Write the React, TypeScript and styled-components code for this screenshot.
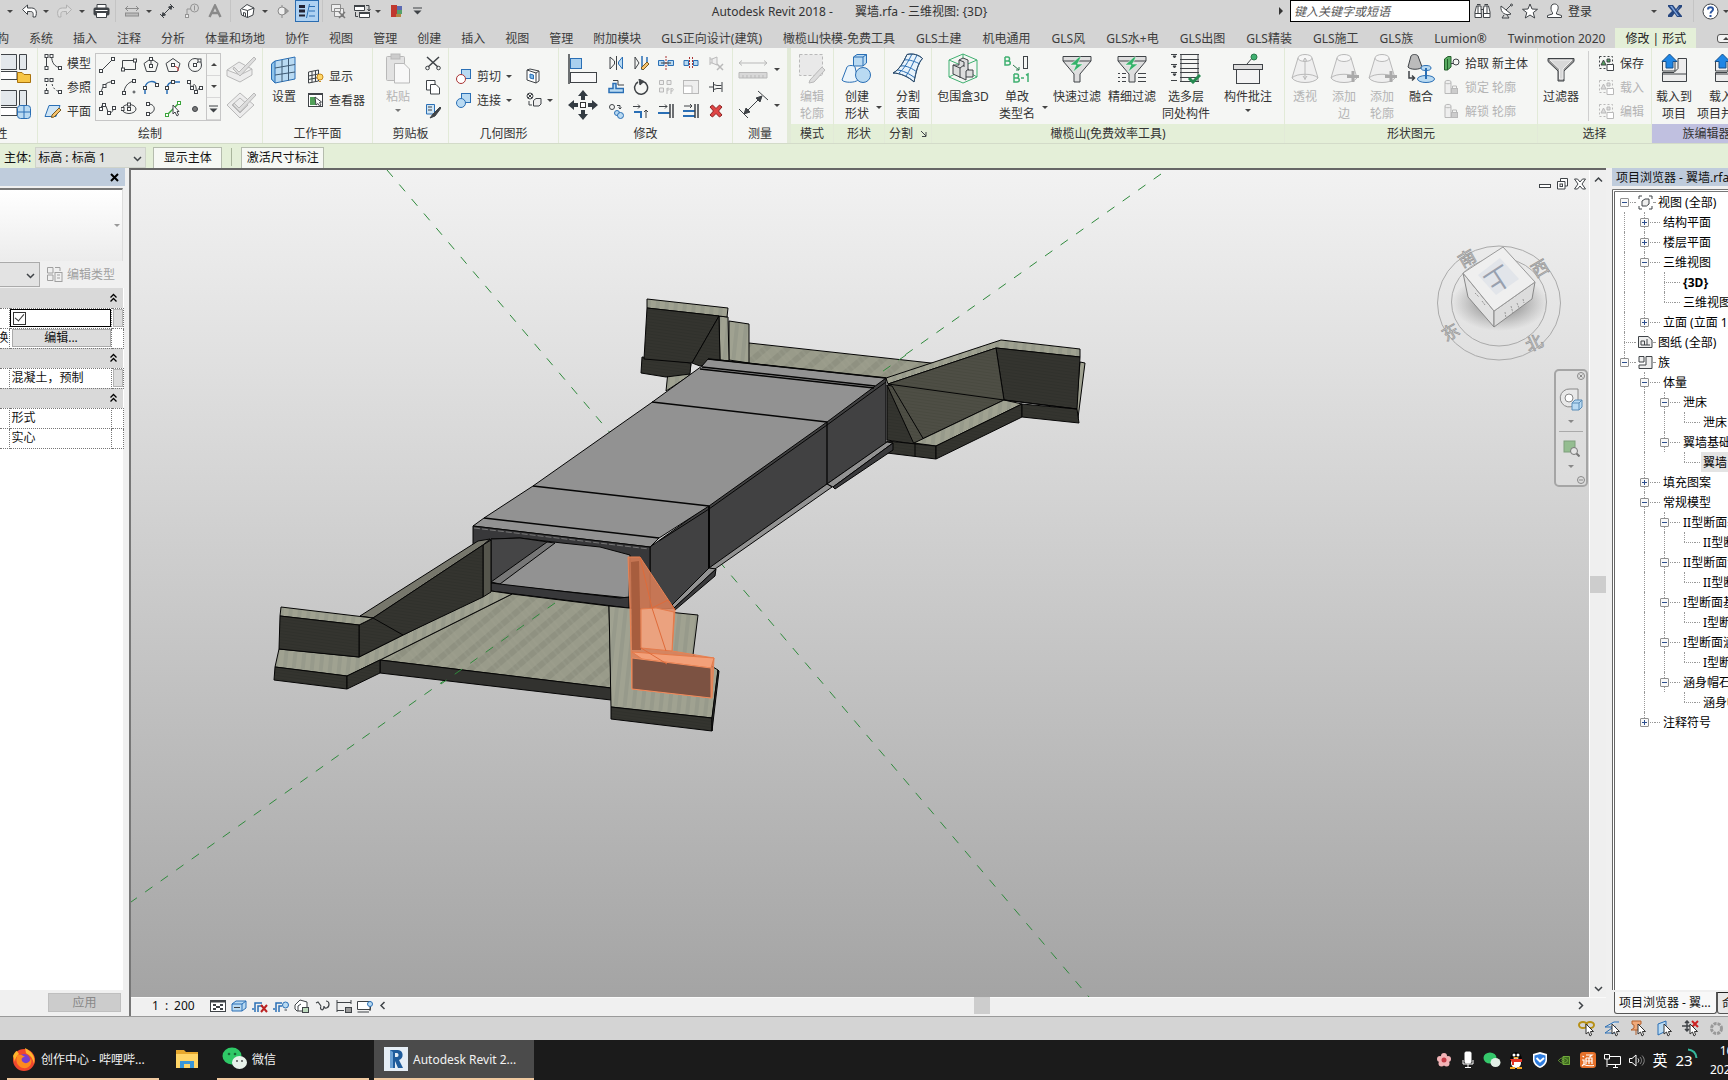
import React from "react";
import styled, { createGlobalStyle, css } from "styled-components";

const Global = createGlobalStyle`
  * { box-sizing: border-box; }
  html, body { margin: 0; padding: 0; overflow: hidden; }
  body, button, input, select {
    font-family: "Noto Sans", "Noto Sans CJK SC", sans-serif;
    font-size: 12px;
    line-height: 17px;
    color: #333;
  }
  button { border: 0; padding: 0; margin: 0; background: none; }
  svg { display: block; flex: none; }
`;

const Shell = styled.div`
  display: flex;
  flex-direction: column;
  width: 100%;
  height: 100vh;
  overflow: hidden;
  background: #f0f0f0;
  white-space: nowrap;
`;

/* ---------- title bar ---------- */
const TitleBar = styled.header`
  flex: none;
  display: flex;
  height: 26px;
  padding-bottom: 4px;
  background: #d4d4d4;
  align-items: center;
`;
const QuickTools = styled.div`
  flex: none;
  display: flex;
  align-items: center;
  width: 428px;
  height: 22px;
`;
const QuickButton = styled.button<{ $w: number; $on?: boolean }>`
  flex: none;
  display: flex;
  align-items: center;
  justify-content: center;
  width: ${(p) => p.$w}px;
  height: 22px;
  ${(p) => p.$on && css`background: #aed1f2; border: 1px solid #2a6cb0;`}
`;
const Sep = styled.span<{ $h?: number; $m?: number; $c?: string }>`
  flex: none;
  width: 1px;
  height: ${(p) => p.$h ?? 22}px;
  margin: 0 ${(p) => p.$m ?? 3}px;
  background: ${(p) => p.$c ?? "#c4c4c4"};
`;
const WindowTitle = styled.div`
  flex: 1;
  display: flex;
  justify-content: center;
  gap: 22px;
  padding-right: 8px;
`;
const TitleTools = styled.div`
  flex: none;
  display: flex;
  align-items: center;
  width: 449px;
  height: 22px;
`;
const Search = styled.input`
  flex: none;
  width: 180px;
  height: 22px;
  margin: 0 2px 0 7px;
  padding: 0 3px;
  border: 1px solid #000;
  border-radius: 0;
  background: #fff;
  font-style: italic;
  &::placeholder { color: #555; opacity: 1; }
`;
const SignIn = styled.button`
  flex: none;
  margin-right: 56px;
`;

const Down = styled.span<{ $up?: boolean; $c?: string }>`
  flex: none;
  width: 0;
  height: 0;
  border-left: 3px solid transparent;
  border-right: 3px solid transparent;
  ${(p) => (p.$up ? "border-bottom" : "border-top")}: 3px solid ${(p) => p.$c ?? "#444"};
`;
const Right = styled.span`
  flex: none;
  width: 0;
  height: 0;
  border-top: 4px solid transparent;
  border-bottom: 4px solid transparent;
  border-left: 4px solid #333;
`;

/* ---------- ribbon tabs ---------- */
const Tabs = styled.nav`
  flex: none;
  display: flex;
  height: 22px;
  padding-top: 2px;
  background: #d4d4d4;
  overflow: hidden;
`;
const TabTrack = styled.div`
  flex: none;
  display: flex;
  margin-left: -25px;
`;
const Tab = styled.button<{ $on?: boolean; $latin?: boolean }>`
  flex: none;
  height: 20px;
  padding: 0 10px 0 ${(p) => (p.$latin ? 11 : 10)}px;
  color: ${(p) => (p.$on ? "#222" : "#3c3c3c")};
  background: ${(p) => (p.$on ? "#e4efd8" : "transparent")};
`;
const RibbonToggle = styled.button`
  display: flex;
  align-items: center;
  justify-content: center;
  width: 18px;
  height: 9px;
  margin: 6px 0 0 21px;
  border: 1px solid #555;
  border-radius: 3px;
  background: #f4f4f4;
`;

/* ---------- ribbon ---------- */
const Ribbon = styled.section`
  flex: none;
  display: flex;
  height: 96px;
  background: #f5f6f4;
  border-bottom: 1px solid #d3dbc9;
  overflow: hidden;
`;
const PanelBox = styled.div<{ $w: number; $last?: boolean }>`
  flex: none;
  display: flex;
  flex-direction: column;
  width: ${(p) => p.$w}px;
  border-right: ${(p) => (p.$last ? 4 : 1)}px solid #e2ead8;
`;
const PanelBody = styled.div<{ $pl?: number }>`
  display: flex;
  flex: 1;
  padding: 3px 0 0 ${(p) => p.$pl ?? 0}px;
`;
const PanelTitle = styled.div<{ $tone?: "green" | "blue" }>`
  display: flex;
  align-items: center;
  justify-content: center;
  gap: 8px;
  height: 19px;
  background: ${(p) => (p.$tone === "green" ? "#e4efd8" : p.$tone === "blue" ? "#c0c0e0" : "transparent")};
`;
/* the first panel starts left of the window edge */
const EdgeTitle = styled.span`
  margin-right: 46px;
`;
const Panel = ({ title, w, pl, tone, last, children }: any) => (
  <PanelBox $w={w} $last={last}>
    <PanelBody $pl={pl}>{children}</PanelBody>
    <PanelTitle $tone={tone}>{title}</PanelTitle>
  </PanelBox>
);
const Big = styled.button<{ $w: number; $off?: boolean }>`
  flex: none;
  display: flex;
  flex-direction: column;
  align-items: center;
  width: ${(p) => p.$w}px;
  height: 73px;
  padding-top: 2px;
  gap: 4px;
  color: ${(p) => (p.$off ? "#b4b4b4" : "#333")};
`;
const SideArrow = styled.span`
  flex: none;
  display: flex;
  align-items: flex-end;
  height: 58px;
`;
const Stack = styled.div<{ $rows: number; $w?: number; $pt?: number; $pl?: number }>`
  flex: none;
  display: grid;
  grid-template-rows: repeat(${(p) => p.$rows}, 24px);
  align-items: center;
  padding: ${(p) => p.$pt ?? 0}px 0 0 ${(p) => p.$pl ?? 0}px;
  width: ${(p) => (p.$w ? p.$w + "px" : "auto")};
  align-content: start;
`;
const Small = styled.button<{ $off?: boolean }>`
  display: flex;
  align-items: center;
  height: 24px;
  gap: 5px;
  color: ${(p) => (p.$off ? "#b4b4b4" : "#333")};
`;
const ArrowSpace = styled.span`
  width: 4px;
`;
const IconGrid = styled.div<{ $cols: number; $cw: number; $rh: number }>`
  flex: none;
  display: grid;
  grid-template-columns: repeat(${(p) => p.$cols}, ${(p) => p.$cw}px);
  grid-auto-rows: ${(p) => p.$rh}px;
  align-content: start;
`;
const Cell = styled.button`
  display: flex;
  align-items: center;
  justify-content: center;
`;
const Gallery = styled.div`
  flex: none;
  display: flex;
  height: 68px;
  margin: 2px 0 0 4px;
  border: 1px solid #c6c6c6;
`;
const GalleryScroll = styled.div`
  display: grid;
  grid-template-rows: repeat(3, 22px);
  width: 14px;
  border-left: 1px solid #c6c6c6;
  & > button { border-bottom: 1px solid #d8d8d8; }
`;

/* ---------- options bar ---------- */
const Options = styled.section`
  flex: none;
  display: flex;
  align-items: center;
  height: 24px;
  padding: 2px 0 0 4px;
  background: #e4efd8;
  color: #111;
`;
const HostSelect = styled.select`
  appearance: none;
  width: 111px;
  height: 21px;
  margin: 0 7px 0 4px;
  padding: 0 2px;
  border: 1px solid #cfd3ca;
  border-radius: 0;
  background: #e2e4e0;
  color: #111;
`;
const SelectWrap = styled.div`
  position: relative;
  display: flex;
  & > svg { position: absolute; right: 11px; top: 7px; pointer-events: none; }
`;
const FlatButton = styled.button<{ $w: number }>`
  width: ${(p) => p.$w}px;
  height: 21px;
  border: 1px solid #b5bcae;
  border-bottom: 0;
  background: #f6f8f4;
  color: #111;
`;

/* ---------- workspace ---------- */
const Work = styled.main`
  flex: 1;
  display: flex;
  min-height: 0;
  border-bottom: 1px solid #9a9a9a;
`;
const Props = styled.aside`
  flex: none;
  display: flex;
  flex-direction: column;
  width: 125px;
  background: #f0f0f0;
  color: #111;
`;
const DockTitle = styled.div<{ $left?: boolean }>`
  flex: none;
  display: flex;
  align-items: center;
  justify-content: ${(p) => (p.$left ? "flex-start" : "flex-end")};
  height: 18px;
  padding: 0 6px 0 4px;
  background: #bfccdc;
  color: #111;
`;
const TypePreview = styled.div`
  flex: none;
  display: flex;
  align-items: center;
  justify-content: flex-end;
  height: 73px;
  margin: 2px 2px 0 0;
  padding-right: 2px;
  border-top: 2px solid #777;
  border-right: 1px solid #ddd;
  background: linear-gradient(#fff, #ececec);
`;
const TypeRow = styled.div`
  flex: none;
  display: flex;
  align-items: center;
  height: 27px;
`;
const TypeSelect = styled.select`
  appearance: none;
  width: 40px;
  height: 25px;
  border: 1px solid #aaa;
  border-left: 0;
  border-radius: 0;
  background: #e3e3e3;
`;
const TypeWrap = styled.div`
  position: relative;
  display: flex;
  margin-right: 6px;
  & > svg { position: absolute; right: 5px; top: 9px; pointer-events: none; }
`;
const EditType = styled.button`
  display: flex;
  align-items: center;
  gap: 4px;
  color: #a0a0a0;
`;
const PropTable = styled.table`
  flex: none;
  width: 123px;
  border-collapse: collapse;
  table-layout: fixed;
  background: #fff;
  & td { height: 20px; padding: 0 0 0 2px; border: 1px dotted #777; overflow: hidden; line-height: 16px; }
  & td:first-child { padding: 0; border-left: 0; direction: rtl; }
  & td:last-child { padding: 0 0 0 1px; }
  & th { height: 20px; padding: 0 6px 0 0; background: #d9d9d9; }
  & th svg { margin-left: auto; }
`;
const Col = styled.col<{ $w: number }>`
  width: ${(p) => p.$w}px;
`;
const FocusCell = styled.label`
  display: flex;
  align-items: center;
  height: 18px;
  margin-left: -2px;
  padding-left: 2px;
  border: 1px solid #000;
`;
const Check = styled.input`
  appearance: none;
  width: 13px;
  height: 13px;
  margin: 0;
  border: 1px solid #333;
  background: #fff;
  display: grid;
  place-items: center;
  &::after { content: ""; width: 4px; height: 8px; margin-top: -3px; border: solid #333; border-width: 0 1px 1px 0; transform: rotate(40deg); }
`;
const EditButton = styled.button`
  display: block;
  width: 99px;
  height: 18px;
  line-height: 16px;
  border: 1px solid #aaa;
  background: #dcdcdc;
  color: #111;
`;
const Mini = styled.button`
  display: block;
  width: 10px;
  height: 18px;
  border: 1px solid #b4b4b4;
  background: #dcdcdc;
`;
const PropFill = styled.div`
  flex: 1;
  margin-right: 2px;
  background: #fff;
`;
const PropFoot = styled.div`
  flex: none;
  display: flex;
  justify-content: flex-end;
  height: 26px;
  padding: 3px 4px 0 0;
`;
const Apply = styled.button`
  width: 73px;
  height: 19px;
  border: 1px solid #bfbfbf;
  background: #cccccc;
  color: #888;
`;
const View = styled.section`
  flex: 1;
  display: flex;
  flex-direction: column;
  min-width: 0;
  margin-left: 4px;
  border-left: 2px solid #777;
  border-top: 2px solid #666;
  background: #f0f0f0;
`;
const ViewTop = styled.div`
  flex: 1;
  display: flex;
  min-height: 0;
`;
const Canvas = styled.div`
  position: relative;
  flex: 1;
  min-width: 0;
  background: linear-gradient(#f2f2f2, #a4a4a4);
`;
const Scene = styled.svg`
  position: absolute;
  inset: 0;
  width: 100%;
  height: 100%;
`;
const MdiButtons = styled.div`
  position: absolute;
  top: 8px;
  right: 3px;
  display: flex;
  gap: 6px;
`;
const Cube = styled.div`
  position: absolute;
  top: 71px;
  right: 27px;
`;
const NavBar = styled.div`
  position: absolute;
  top: 199px;
  right: 1px;
  display: flex;
  flex-direction: column;
  align-items: center;
  gap: 8px;
  width: 34px;
  height: 118px;
  padding: 1px;
  border: 2px solid #a5a5a5;
  border-radius: 5px;
  background: rgba(225, 225, 225, 0.6);
  & > :first-child, & > :last-child { align-self: flex-end; }
  & > :last-child { margin-top: auto; }
  & > hr { width: 24px; margin: 0; border: 0; border-top: 1px solid #aaa; }
`;
const VScroll = styled.div`
  flex: none;
  display: flex;
  flex-direction: column;
  align-items: center;
  justify-content: space-between;
  width: 17px;
  padding: 5px 0 4px;
  border-left: 1px solid #fff;
  background: #efefef;
`;
const Thumb = styled.span`
  width: 16px;
  height: 17px;
  background: #cdcdcd;
`;
const ViewBar = styled.div`
  flex: none;
  display: flex;
  align-items: center;
  height: 19px;
  padding: 0 21px 3px 21px;
  border-top: 1px solid #fafafa;
  color: #111;
`;
const Scale = styled.button`
  display: flex;
  gap: 6px;
  width: 58px;
  color: #111;
`;
const ViewTool = styled.button`
  width: 21px;
  height: 16px;
`;
const HTrack = styled.div`
  flex: 1;
  display: flex;
  justify-content: center;
`;
const Browser = styled.aside`
  flex: none;
  display: flex;
  flex-direction: column;
  width: 116px;
  margin-left: 6px;
  background: #f0f0f0;
  overflow: hidden;
`;
const TreeBox = styled.div`
  flex: 1;
  margin-top: 3px;
  border-top: 3px double #777;
  border-left: 3px double #666;
  background: #fff;
  overflow: hidden;
`;
const TreeRow = styled.div<{ $bold?: boolean; $sel?: boolean }>`
  display: flex;
  align-items: center;
  height: 20px;
  color: #000;
  font-weight: ${(p) => (p.$bold ? 700 : 400)};
  & > button { color: #000; font-weight: inherit; padding: 0 2px; margin-left: -1px; background: ${(p) => (p.$sel ? "#e4e4e4" : "none")}; height: 20px; }
`;
/* one 20px column of connector lines: v = full height, h = upper half */
const Guide = styled.span<{ $v?: boolean; $h?: boolean; $e?: boolean }>`
  position: relative;
  flex: none;
  width: 20px;
  height: 20px;
  &::before { content: ""; position: absolute; left: 9px; top: 0; height: ${(p) => (p.$v ? 20 : p.$h ? 10 : 0)}px; border-left: 1px dotted #999; }
  &::after { content: ""; position: absolute; left: 9px; right: 0; top: 10px; border-top: ${(p) => (p.$e ? "1px dotted #999" : "0")}; }
`;
const Toggle = styled.button<{ $plus?: boolean }>`
  && {
    position: absolute;
    left: 5px;
    top: 6px;
    z-index: 1;
    width: 9px;
    height: 9px;
    border: 1px solid #919191;
    border-radius: 1px;
    background: ${(p) =>
      p.$plus
        ? "linear-gradient(#2d4f8f,#2d4f8f) center/5px 1px no-repeat, linear-gradient(#2d4f8f,#2d4f8f) center/1px 5px no-repeat, #fafafa"
        : "linear-gradient(#2d4f8f,#2d4f8f) center/5px 1px no-repeat, #fafafa"};
  }
`;
const Lead = styled.span<{ $w: number }>`
  flex: none;
  width: ${(p) => p.$w}px;
  margin-right: 2px;
  border-top: 1px dotted #999;
`;
const DockTabs = styled.div`
  flex: none;
  display: flex;
  height: 26px;
  padding: 2px 0 2px 2px;
`;
const DockTab = styled.button<{ $on?: boolean }>`
  flex: none;
  width: ${(p) => (p.$on ? 103 : 60)}px;
  padding-left: 4px;
  text-align: left;
  color: #111;
  border: 1px solid #555;
  border-top: ${(p) => (p.$on ? 0 : "1px solid #222")};
  border-radius: 0 0 3px 3px;
  background: ${(p) => (p.$on ? "#f8f8f8" : "#e8e8e8")};
`;

const Status = styled.footer`
  flex: none;
  display: flex;
  align-items: center;
  justify-content: flex-end;
  gap: 8px;
  height: 23px;
  padding-right: 3px;
  background: #d4d4d4;
`;

/* ---------- taskbar ---------- */
const Taskbar = styled.nav`
  flex: none;
  display: flex;
  height: 40px;
  padding-left: 7px;
  background: #1b1b1b;
  overflow: hidden;
`;
const Task = styled.button<{ $w: number; $on?: boolean; $line?: boolean; $mr?: number }>`
  flex: none;
  display: flex;
  align-items: center;
  gap: 5px;
  width: ${(p) => p.$w}px;
  margin-right: ${(p) => p.$mr ?? 5}px;
  padding: 0 5px;
  color: #f2f2f2;
  background: ${(p) => (p.$on ? "#4b4b4b" : "none")};
  border-bottom: 2px solid ${(p) => (p.$line ? "#f0c9a0" : "transparent")};
  ${(p) => p.$on && css`padding-left: 10px;`}
`;
const Tray = styled.div`
  display: flex;
  align-items: center;
  margin-left: auto;
  color: #fff;
`;
const TrayItem = styled.button<{ $big?: boolean }>`
  position: relative;
  display: flex;
  align-items: center;
  justify-content: center;
  width: 24px;
  height: 40px;
  color: #fff;
  font-size: ${(p) => (p.$big ? 15 : 12)}px;
`;
const TempArc = styled.span`
  position: absolute;
  top: 8px;
  right: -2px;
`;
const Clock = styled.button`
  width: 60px;
  margin: 0 -37px 0 9px;
  line-height: 19px;
  text-align: center;
  color: #fff;
`;

/* ---------- icons ---------- */
const K = "#3f4347";
const B = "#2a6fb5";
const L = "#b9daf2";
const G = "#b9b9b9";
const Ic = ({ w = 16, h = w, c = K, f = "none", s = 1, children }: any) => (
  <svg width={w} height={h} viewBox={`0 0 ${w} ${h}`} fill={f} stroke={c} strokeWidth={s} aria-hidden="true">
    {children}
  </svg>
);
const dots = (pts: number[][], c = K) =>
  pts.map(([x, y], i) => <rect key={i} x={x - 1.5} y={y - 1.5} width="3" height="3" fill="#fff" stroke={c} />);

const Undo = () => <Ic w={17}><path fill="#fff" d="M1.500 6.500 L6.500 2 V5 H10.500 C15 5 16.500 9 14.500 14 H12 C12.500 10 12 8.500 9.500 8.500 H6.500 V11.500 Z" /></Ic>;
const Redo = () => <Ic w={17} c="#b0b0b0"><path fill="#ddd" d="M15.500 6.500 L10.500 2 V5 H6.500 C2 5 .5 9 2.500 14 H5 C4.500 10 5 8.500 7.500 8.500 H10.500 V11.500 Z" /></Ic>;
const Printer = () => <Ic w={17} h={16}><path fill="#fff" d="M4 5 V1.500 H13 V5" /><rect x="1" y="5" width="15" height="7" rx="1" fill="#3f4347" /><path d="M2.500 7.500 H14.500" stroke="#fff" /><path fill="#fff" d="M3.500 9.500 H13.500 V14.500 H3.500Z" /></Ic>;
const MeasureS = () => <Ic w={16} c="#8c8c8c"><path d="M1 5.500 H15 M4 3 L1.500 5.500 L4 8 M12 3 L14.500 5.500 L12 8" /><rect x="1.500" y="10" width="13" height="3" fill="#bbb" /></Ic>;
const DimS = () => <Ic w={16}><path d="M3 13 L13 3 M1 11 L5 15 M11 1 L15 5" /><path fill={K} d="M3 13 L4 9.500 L6.500 12Z M13 3 L9.500 4 L12 6.500Z" /></Ic>;
const TagS = () => <Ic w={16} c="#949494"><circle cx="10.500" cy="5" r="4" /><path d="M7 6 H3 V14" /><path d="M10.500 2.500 V7.500" /><rect x="1.500" y="11.500" width="3" height="3" fill="#eee" /></Ic>;
const TextA = () => <Ic w={14} c="#8a8a8a" s={2.4}><path d="M1.500 13 L7 1.500 L12.500 13 M4 9 H10" /></Ic>;
const House = () => <Ic w={17} h={16}><path fill="#fff" d="M1.500 6.500 L8 1.500 L15 5 L14 12 L8.500 14.500 L2.500 12Z" /><path d="M8.500 14.500 V7.500 L3 6 M8.500 7.500 L15 5 M4.500 13 V9.500 L6.500 10 V13.500" /></Ic>;
const Section = () => <Ic w={14} c="#8a8a8a"><circle cx="6" cy="7" r="4" fill="#eee" /><path d="M6 1 V3 M6 11 V14" /><path fill="#999" d="M9 4 L12.500 7 L9 10Z" /></Ic>;
const ThinLines = () => <Ic w={20} h={16}><path stroke="#223" strokeWidth="3" d="M2 3.500 H8 M2 8 H8" /><path stroke="#223" strokeWidth="2" d="M2 12.500 H8" /><path stroke={B} d="M12 3.500 H18 M12 8 H18 M12 13 H18 M9.500 15 L12.500 1" /></Ic>;
const CloseHidden = () => <Ic w={16} c="#8b8b8b"><path fill="#eee" d="M1.500 1.500 H10.500 V8.500 H1.500Z M4.500 5.500 H13.500 V13.500 H4.500Z" /><path d="M9 9 L15 15 M15 9 L9 15" stroke="#777" strokeWidth="1.500" /></Ic>;
const SwitchWin = () => <Ic w={18} h={16}><path fill="#fff" d="M1.500 2.500 H11.500 V7.500 H1.500Z M6.500 9.500 H16.500 V14.500 H6.500Z" /><path strokeWidth="2" d="M1 3 H12 M6 10 H17" /><path d="M13 2.500 H16 V8 M14.500 6 L16 8 L17.500 6 M2.500 9 V13.500 H5" /></Ic>;
const Colour = () => <Ic w={13} h={15} c="none"><rect x="1" y="1" width="6" height="12" fill="#c0392f" /><rect x="7" y="2" width="5" height="4" fill="#5b6ab3" /><rect x="7" y="6" width="5" height="4" fill="#56a06b" /><rect x="6" y="10" width="5" height="3" fill="#b58742" /></Ic>;
const Customize = () => <Ic w={9} h={8}><path d="M0 1 H9" /><path fill={K} stroke="none" d="M0.500 3.500 H8.500 L4.500 7.500Z" /></Ic>;
const Binoc = () => <Ic w={17} h={16}><path fill="#fff" d="M2.500 3 H7 V6 L7.500 14.500 H1 V9Z M10 3 H14.500 L16 9 V14.500 H9.500 V6Z" /><path d="M7 6.500 H10 M1 10.500 H7.500 M9.500 10.500 H16 M3 1.500 H6.500 M10.500 1.500 H14 M4 3 V10 M13 3 V10" /></Ic>;
const Dish = () => <Ic w={15} h={16}><path fill="#fff" d="M2 3 C1 10 7 13 12 11Z" /><path d="M7 7 L12 2 M5 12 L3 15 H10 L8 12" /><circle cx="12.500" cy="2" r="1" /></Ic>;
const Star = () => <Ic w={16}><path fill="#fff" d="M8 1 L10 6 L15.500 6.300 L11.200 9.600 L12.700 15 L8 12 L3.300 15 L4.800 9.600 L0.500 6.300 L6 6Z" /></Ic>;
const User = () => <Ic w={17} h={16}><path fill="#fff" d="M8.500 1 C12 1 12.500 4 12 6 C11.500 8 11 9 10.500 9.500 V11 L15.500 12.500 V14.500 H1.500 V12.500 L6.500 11 V9.500 C5.500 8.500 5 7 5 5 C5 2 6.500 1 8.500 1Z" /></Ic>;
const XLogo = () => <Ic w={16} c="none"><path fill="#27477f" d="M1 2 H6 L9 6 L12 2 H15 V4 L11 8 L15 13 V14 H10 L7.500 10.500 L5 14 H1 V12 L5 8 L1 3.500Z" /><path fill="#7da3dd" d="M3 3 H5 L12 13 H10.500Z M13 3 L9.500 7 L10 8Z" /></Ic>;
const Help = () => <Ic w={17}><circle cx="8.500" cy="8.500" r="7.500" fill="#fff" /><path stroke="#2a55a0" strokeWidth="2" d="M6 6.500 C6 3.500 11 3.500 11 6.500 C11 8.500 8.500 8 8.500 10.500 M8.500 12 V14" /></Ic>;

const PropWin = ({ grid }: any) => <Ic w={31} h={31}><path fill="#e3e8ec" d="M0 .5 H15.500 V15.500 H0 M18.500 .5 H25.500 V15.500 H18.500Z" /><path fill="#fff" d="M0 17.500 H16 V25.500 H0" />{grid ? <><rect x="16.500" y="15.500" width="13" height="13" rx="3" fill={L} stroke={B} /><path stroke={B} d="M23 15.500 V28.500 M16.500 22 H29.500" /></> : <path fill="#f7c545" stroke="#a9720c" d="M16.500 18.500 H21 L23 20.500 H29.500 V28.500 H16.500Z" />}</Ic>;
const ModelL = ({ d }: any) => <Ic w={18}><path strokeDasharray={d ? "2 2" : undefined} d="M2.500 2 V14" /><path strokeDasharray={d ? "2 2" : undefined} d="M7.500 2 C8 9 10 12 16 14" />{dots([[2.5, 2], [2.5, 14], [7.5, 2], [16, 14]])}</Ic>;
const PlaneI = () => <Ic w={18}><path fill="#cfe5f5" stroke={B} d="M5 3.500 H16 L12 14.500 H1Z" /><path fill="#f6c36d" stroke="#7a5a20" d="M8 13 L15 6 L17 8 L10 15 L7.500 15.500Z" /></Ic>;

const gallery = [
  <><path d="M2 14 L14 2" />{dots([[2, 14], [14, 2]])}</>,
  <><path d="M1.500 3.500 H14.500 V12.500 H1.500Z" />{dots([[14, 3.5], [2, 12.5]])}</>,
  <><path d="M8 1.500 L15 6.500 L12.500 14.500 H3.500 L1 6.500Z M8 2 V9" />{dots([[8, 2], [8, 9]])}</>,
  <><path d="M8 1.500 L15 6.500 L12.500 14.500 H3.500 L1 6.500Z" /><path stroke="#c33" d="M8 8 L13 11 V14" />{dots([[8, 8]])}</>,
  <><circle cx="8" cy="8" r="6.500" /><path d="M8 8 L12.500 3.500" />{dots([[8, 8], [12.5, 3.5]])}</>,
  <><path d="M2 14 C3 7 8 2 14 3" />{dots([[2, 14], [5.5, 7], [14, 3]])}</>,
  <><path d="M3 14 C3 8 7 3 13 2 M13 11.500 V14.500 M11.500 13 H14.500" />{dots([[3, 14], [13, 2]])}</>,
  <><path stroke={B} strokeWidth="1.500" d="M2 15 V9 C3 1 12 1 14 6" />{dots([[2, 9], [14, 6]])}</>,
  <><path stroke={B} strokeWidth="1.500" d="M2 15 V10 C2 5 5 3 9 3 H15" />{dots([[2, 9], [8, 3]])}</>,
  <><path d="M2 3 L5 9 C7 2 10 7 9 13 L14 7" />{dots([[2, 3], [5, 9], [9, 13], [14, 9]])}</>,
  <><path d="M1 9 C4 1 6 2 8 8 C10 15 13 12 15 7" />{dots([[2, 8], [5, 4], [10, 12], [15, 7]])}</>,
  <><ellipse cx="8" cy="8" rx="7" ry="4.500" />{dots([[8, 8], [8, 3.5], [1.5, 8]])}</>,
  <><path d="M4 3 C13 2 14 12 5 13" />{dots([[5, 3], [5, 13]])}</>,
  <><path stroke="#3aa53a" strokeWidth="1.500" d="M1 15 L14 2" />{dots([[2, 14], [14, 2]], "#3aa53a")}<path fill="#fff" d="M8 4 V13 L10 11 L12 15 L13.500 14 L12 10.500 H14Z" /></>,
  <circle cx="8" cy="8" r="2.500" fill="#777" />,
];
const SketchOff = ({ flat }: any) => <Ic w={30} c={G}><path fill="#ececec" d={flat ? "M14 3 L28 15 L14 28 L1 15Z M14 8 L22 15 L14 23 L6 15Z" : "M1 16 L13 8 L26 15 V21 L14 28 L1 22Z M1 16 L14 21 L26 15"} /><path fill="#ddd" d="M8 13 L13 18 L28 3 L30 5 L14 22 L7 15Z" /></Ic>;
const SetPlane = () => <Ic w={28} h={28} c={B}><path fill={L} d="M5 5 L25 1 V23 L5 27 L1.500 23 V8Z" /><path fill="#8fc4ea" d="M1.500 8 L5 5 V27 L1.500 23Z" /><path stroke="#3f5a74" d="M12 4 V26 M18.500 2.500 V24.500 M5 12 L25 8.500 M5 19 L25 16" /></Ic>;
const ShowI = () => <Ic w={17}><path d="M1.500 4 L11.500 2 V13 L1.500 15Z M5 3.500 V14.500 M8.500 2.500 V13.500 M1.500 8 L11.500 6 M1.500 11.500 L11.500 9.500" /><circle cx="13" cy="9" r="3" fill="#ffd76b" stroke="#c78a1c" /><path stroke="#c78a1c" d="M12 13.500 H14" /></Ic>;
const ViewerI = () => <Ic w={17} h={16}><rect x="1.500" y="1.500" width="14" height="13" fill="#fff" /><path strokeWidth="2" d="M1 2 H16" /><path fill="#51a058" stroke="none" d="M3 5 H9 V13 H3Z" /><path fill="#fff" d="M8 5 L9 13 L11 11.500 L12.500 14 L14 13 L12.500 10.500 L14.500 10Z" /></Ic>;
const PasteI = () => <Ic w={26} h={31} c={G}><rect x="1.500" y="3.500" width="18" height="24" rx="1" fill="#e2e2e2" /><rect x="6" y="1" width="9" height="5" fill="#ccc" /><path fill="#f8f8f8" d="M9.500 10.500 H19 L24.500 16 V30 H9.500Z" /></Ic>;
const Cut = () => <Ic w={16}><path strokeWidth="1.500" d="M2 2 L13 12 M14 2 L3 12" /><circle cx="2.500" cy="13" r="1.800" /><circle cx="13.500" cy="13" r="1.800" /></Ic>;
const CopyI = () => <Ic w={16}><path fill="#fff" d="M1.500 1.500 H10 V11 H1.500Z" /><path fill="#fff" d="M5.500 5.500 H11 L14.500 9 V15 H5.500Z" /></Ic>;
const MatchI = () => <Ic w={16}><path fill="#cfe5f5" stroke={B} d="M1.500 1.500 H9.500 V11 H1.500Z" /><path d="M3 4 H7 M3 7 H7" /><path fill={K} d="M15 4 L8 11 L5 15 L10 13 L16 5Z" /></Ic>;
const CutGeo = () => <Ic w={17} c={B}><rect x="6.500" y="1.500" width="9" height="9" fill={L} /><circle cx="6" cy="11" r="4.500" fill="#fff" stroke="#a33" /></Ic>;
const JoinGeo = () => <Ic w={17} c={B}><rect x="6.500" y="1.500" width="9" height="9" fill={L} /><circle cx="6" cy="11" r="4.500" fill={L} /></Ic>;
const WallGeo = () => <Ic w={16}><path fill="#fff" d="M2 2 L11 5 V15 L2 12Z M11 5 L14 3 V13 L11 15 M2 2 L5 1 L14 3" /><path fill="#7fb9e6" stroke={B} d="M5 6 L8.500 7 V11 L5 10Z" /></Ic>;
const ChainGeo = () => <Ic w={17}><circle cx="5" cy="4" r="3" /><path d="M3 2 L7 6 M7 2 L3 6 M4 9 V13 H7" /><path fill="#eee" d="M8.500 8.500 L11 6.500 H16 V12 L14 14 H8.500Z" /></Ic>;
const Align = () => <Ic w={30}><path strokeWidth="1.500" d="M1 0 V30" /><rect x="2.500" y="4.500" width="11" height="10" fill="#a9d0ef" stroke={B} /><rect x="2.500" y="18.500" width="26" height="10" fill="#f8f8f8" /></Ic>;
const Move = () => <Ic w={30} c="none"><path fill="#333b42" d="M15 0 L20 6 H17 V10 H13 V6 H10Z M15 30 L20 24 H17 V20 H13 V24 H10Z M0 15 L6 10 V13 H10 V17 H6 V20Z M30 15 L24 10 V13 H20 V17 H24 V20Z" /><rect x="12.500" y="12.500" width="5" height="5" fill="#fff" stroke="#333" /></Ic>;
const modify = [
  <><path d="M2 2 V14 L6.500 9 V6 Z M8.500 1 V15" /><path stroke={B} fill={L} d="M14.500 2 V14 L10.500 9 V7Z" /></>,
  <><path d="M2 2 V14 L6 8 Z" /><path stroke={B} strokeWidth="1.500" d="M9 1 V15 M14 2 V7" /><path fill="#f6c36d" stroke="#7a5a20" d="M8 13 L14 7 L16 9 L10 15Z" /></>,
  <><path fill={L} stroke={B} d="M.5 5.500 H6 V10.500 H.5Z M10 5.500 H15.500 V10.500 H10Z" /><path stroke="#a33" strokeDasharray="2 1" d="M8 1 V15" /><path d="M3 8 H13" /></>,
  <><path fill={L} stroke={B} d="M1 5.500 H5.500 V10.500 H1Z M10.500 5.500 H15 V10.500 H10.500Z" /><path stroke="#a33" strokeDasharray="2 1" d="M6.500 2 V14 M9.500 2 V14" /></>,
  <g stroke={G}><path fill="#eee" d="M2 2 V10 M2 4 H4 V8 H2 M4 4 L9 2 V10 L4 8" /><path strokeWidth="1.500" d="M9 9 L15 15 M15 9 L9 15" /></g>,
  <><path d="M5 1.500 H10 V6 H16" /><path stroke={B} strokeWidth="1.500" fill={L} d="M1 13.500 V9.500 H5 V4.500 H8 V9.500 H15.500 V13.500Z" /></>,
  <><path strokeWidth="1.500" d="M5 3 A6.500 6.500 0 1 0 10 2.500" /><path fill={K} d="M6 0 L11 2.500 L7 6Z" /></>,
  <g stroke={G}><path fill="#eee" d="M1.500 1.500 H5.500 V5.500 H1.500Z M9 1.500 H13 V5.500 H9Z M1.500 9 H5.500 V13 H1.500Z" /><path d="M9 15 V9 M9 9.500 C12 8 12 12 9 11 M13 9 V15 M13 10 C16 8 16 13 13 12" /></g>,
  <g stroke={G}><rect x=".5" y="1.500" width="15" height="13" fill="#eee" /><path fill="#fff" d="M.5 7 H9 V14.500 H.5Z" /></g>,
  <path fill="#fff" d="M1 8 H5 M5.500 3 V13 M5.500 5.500 L9 6.500 H13.500 M5.500 10.500 L9 9.500 H13.500 M14 3 V13" />,
  <><circle cx="4" cy="4" r="2.500" /><path d="M9 2.500 H12 V6 M10.500 4.500 L12 6 L13.500 4.500" /><circle cx="9" cy="10" r="2.500" fill={L} stroke={B} /><circle cx="12.500" cy="12.500" r="3" fill={L} stroke={B} /></>,
  <><path d="M0 3.500 H7 M5 1.500 L7 3.500 L5 5.500 M13 15 V7 M11 9 L13 7 L15 9" /><path stroke={B} strokeWidth="2" d="M1 9 H8 V15" /></>,
  <><path d="M1 3.500 H9 M7 1.500 L9 3.500 L7 5.500" /><path stroke={B} strokeWidth="2" d="M0 10 H12" /><path strokeWidth="1.500" d="M12 1 V15 M15 1 V15" /></>,
  <><path d="M1 3 H9 M7 1 L9 3 L7 5" /><path stroke={B} strokeWidth="2" d="M0 8 H12 M0 13 H12" /><path strokeWidth="1.500" d="M12 1 V15 M15 1 V15" /></>,
  <path fill="#e04545" stroke="#8c2020" d="M2 4 L4.500 2 L8 5.500 L11.500 2 L14 4 L10.500 8 L14 12 L11.500 14 L8 10.500 L4.500 14 L2 12 L5.500 8Z" />,
];
const Measure1 = () => <Ic w={30} h={22} c={G}><path d="M1 5 H29 M4 2.500 L1 5 L4 7.500 M26 2.500 L29 5 L26 7.500" /><path fill="#d8d8d8" d="M1 14.500 H29 V20 H1Z M5 17 V20 M9 17 V20 M13 17 V20 M17 17 V20 M21 17 V20 M25 17 V20" /></Ic>;
const Measure2 = () => <Ic w={30}><path d="M6 24 L24 6 M1 19 L10 28 M20 1 L30 10" /><path fill={K} d="M6 24 L8 18 L12 22Z M24 6 L18 8 L22 12Z" /></Ic>;
const EditProfile = () => <Ic w={28} h={31} c={G}><rect x="1.500" y="1.500" width="23" height="21" fill="#e9e9e9" strokeDasharray="3 2" /><path fill="#ddd" d="M12 27 L24 14 L27 17 L16 29 L11 30Z" /></Ic>;
const CreateForm = () => <Ic w={32} h={31} c={B}><path fill={L} d="M12.500 4 L16 1.500 H25.500 V10 L22 13 H12.500Z M12.500 4 H22 V13 M22 4 L25.500 1.500" /><path fill="#eaf4fb" d="M6 14 C7 12 13 12 14 14 L17 27 C14 30 3 30 1 27Z" /><circle cx="22" cy="22" r="7.500" fill={L} /></Ic>;
const Divide = () => <Ic w={32} h={31} c={B}><path fill="#e8f3fb" d="M15 1.500 C21 0 27 2 30.500 5.500 C26 10 24 19 22 29 C17 24 8 20 1 20 C7 17 11 10 15 1.500Z" /><path d="M12 7 C17 6 24 9 28 11 M9 13 C14 12 21 16 25 19 M5 17 C10 17 18 21 23 25 M20 1 C16 9 12 16 7 20 M25 2 C21 10 18 17 14 23" /><path stroke="#34495e" d="M15 1.500 C21 0 27 2 30.500 5.500 C26 10 24 19 22 29 C17 24 8 20 1 20 C7 17 11 10 15 1.500Z" /></Ic>;
const GR = "#3fb070";
const BoxIcon = () => <Ic w={30} h={31}><path stroke={GR} d="M15 1 L29 7 V24 L15 30 L1 24 V7Z M15 1 V8 M1 24 L7 21 M29 24 L24 21 M1 7 L15 13 L29 7" /><path fill="#ddd" d="M11 7 L15 5 L20 7 V17 L25 17 V24 L18 24 V27 L14 25 L5 21 V12 L11 12Z M5 12 L12 15 V25 M12 15 L16 12 M18 24 V18 L21 16 M11 7 L16 9 V14" /></Ic>;
const Rename = () => <Ic w={30} h={31}><g stroke={GR} strokeWidth="1.500"><path d="M3 4 V12 H6 C9 12 9 8 6 8 H3 M3 4 H6 C8 4 8 8 6 8" /><path d="M12 21 V29 H15 C18 29 18 25 15 25 H12 M12 21 H15 C17 21 17 25 15 25 M19 25 H22 M24 22 L26 21 V29" /></g><path stroke="#2b7a4c" d="M11 12 L17 17 M17 14 V17 H14" /><rect x="21.500" y="3.500" width="4" height="12" /></Ic>;
const Funnel = ({ lines }: any) => <Ic w={30} h={31}><path fill="#dedede" d="M1 3.500 H29 V8 L18 21 V29 H12 V21 L1 8Z M1 8 H29" /><path fill="#34b26a" stroke="#fff" strokeWidth=".5" d="M17 4 L8 12 H14 L11 19 L21 11 H15.500 L19 4Z" />{lines && <path d="M1 20.500 H3 M5 20.500 H9 M1 24.500 H3 M5 24.500 H9 M1 28.500 H3 M5 28.500 H9 M21 20.500 H29 M21 24.500 H29 M21 28.500 H29" />}</Ic>;
const Floors = () => <Ic w={30} h={31}><path d="M9 1.500 H28 M9 6.500 H28 M9 10.500 H28 M9 15.500 H28 M9 19.500 H28 M9 24.500 H28 M9 28.500 H28 M10 1 V29 M27 1 V29 M0 1.500 H6 M0 11.500 H6 M0 19.500 H6 M0 27.500 H6" /><path fill={K} d="M2 3 H5 L3.500 5Z M2 13 H5 L3.500 15Z M2 21 H5 L3.500 23Z" /><path stroke="#258a50" strokeWidth="3" d="M18 25 L22 29 L29 22" /></Ic>;
const Annot = () => <Ic w={32} h={31}><path d="M15 11 L21 4" /><circle cx="22" cy="4" r="3" fill={GR} stroke="#2b7a4c" /><rect x="1.500" y="11.500" width="29" height="5" fill="#ddd" /><rect x="4.500" y="16.500" width="23" height="14" fill="#f3f3f3" /></Ic>;
const Cone = ({ plus, axis }: any) => <Ic w={30} h={31} c={G}><path fill="#efefef" d="M8 5 L2 25 C6 31 24 31 28 25 L22 5" /><ellipse cx="15" cy="5" rx="7" ry="3.500" fill="#f6f6f6" /><path d="M2 25 C6 20 24 20 28 25" />{axis && <path d="M15 5 V27 M13 8 L15 5 L17 8 M13 23 L15 26 L17 23" />}{plus && <path strokeWidth="3" stroke="#aaa" d="M24 18 V29 M18 23.500 H30" />}</Ic>;
const Merge = () => <Ic w={30} h={31}><path fill="#bbb" d="M5 3 L2 14 C4 17 14 17 16 14 L12 3 C11 1 6 1 5 3Z" /><path d="M3 18 V25 H8 M6 22.500 L8.500 25 L6 27.500" strokeWidth="1.500" /><g stroke={B}><ellipse cx="20" cy="26" rx="8.500" ry="3.500" fill={L} /><ellipse cx="20" cy="15" rx="5" ry="2.500" fill={L} /><path d="M20 15 V26" strokeWidth="2" /></g></Ic>;
const PickHost = () => <Ic w={17}><path fill="#59ab62" stroke="#245e2b" d="M1.500 4 L5 1.500 H8 V12 L4.500 15 H1.500Z M4.500 4 V15" /><circle cx="13" cy="7" r="3" /><path d="M8 8.500 H10" /></Ic>;
const LockI = () => <Ic w={17} c={G}><path fill="#eee" d="M2 2.500 C3 1 7 1 8 2.500 V14.500 H2Z M2 4 C4 5 6 5 8 4" /><rect x="8.500" y="9.500" width="6" height="5" fill="#ccc" /><path d="M9.500 9 V7 H13.500 V9" /></Ic>;
const Filter = () => <Ic w={28} h={31}><g transform="translate(0 2)"><path fill="#999" d="M1 3.500 H27 V6.500 L17 16 V26 H11 V16 L1 6.500Z" /><path stroke="#f0f0f0" fill="#d8d8d8" d="M3 5 H25 L16 14 V24 H12.500 V14Z" /></g></Ic>;
const SelI = ({ c = G, k }: any) => <Ic w={17} c={c}><rect x="1.500" y="1.500" width="13" height="12" strokeDasharray="2 2" /><path fill={k ? "#53a35d" : "#ddd"} d="M3 10 L5.500 5 L8 10Z M9 4 H12 V7 H9Z" /><path fill="#fff" d="M9 9.500 H15.500 V15.500 H9Z" /></Ic>;
const LoadI = () => <Ic w={27} h={31}><path fill="#ededed" d="M1.500 19.500 H13 L17 15.500 V5.500 H25.500 V28.500 H1.500Z" /><path fill="#eee" d="M1.500 8 H14 V18 H1.500Z" /><path d="M1.500 21 H25" /><path fill="#1f86e5" stroke="#14508c" d="M8.500 1 L16 8.500 H12 V15 H5 V8.500 H1Z" /></Ic>;

const Chevron = ({ d = "down", w = 9 }: any) => <Ic w={w} h={w} s={1.5}><path d={d === "down" ? "M1 3 L4.500 6.500 L8 3" : d === "up" ? "M1 6.500 L4.500 3 L8 6.500" : d === "right" ? "M3 1 L6.500 4.500 L3 8" : "M6.500 1 L3 4.500 L6.500 8"} /></Ic>;
const DoubleUp = () => <Ic w={7} h={10} c="#000" s={1.3}><path d="M.5 4.500 L3.500 1.500 L6.500 4.500 M.5 8.500 L3.500 5.500 L6.500 8.500" /></Ic>;

const viewTools = [
  <><rect x=".5" y="2.500" width="15" height="11" fill="#fff" /><path strokeWidth="2" d="M1 3.500 H15 M3 7 H6 M10 7 H13 M6 9 H10 M3 11 H6 M10 11 H13" /></>,
  <><path fill={L} stroke={B} d="M1 6 L5 3 H15 V10 L11 13 H1Z M1 6 H11 V13 M11 6 L15 3" /><path d="M3 9.500 H9" /></>,
  <><path stroke={B} strokeWidth="1.500" d="M3 14 V5 H10 M0 11 H2 M6 14 V8 H11" /><path stroke="#b22" strokeWidth="2" d="M9 7 L15 14 M15 7 L9 14" /></>,
  <><path stroke={B} strokeWidth="1.500" d="M3 14 V5 H9 M0 11 H2 M6 14 V8 H9" /><circle cx="12.500" cy="7" r="3" fill={L} stroke={B} /><path d="M11.500 12 H14" /></>,
  <><path fill="#fff" d="M1 7 L6 2 L13 4 V13 H3 L1 11Z M4 13 V8 L7 6" /><rect x="8.500" y="9.500" width="6" height="5" fill="#bcd9bc" /></>,
  <path d="M1 5 L3 4 L6 8 M6 8 C4 12 9 14 9 8 M9 8 C9 11 14 11 14 6 C14 4 12 3 11 3" strokeWidth="1.200" />,
  <><path d="M1 2 V14 M1 4.500 H15 M15 2 V6 M1 12.500 H8" /><rect x="9.500" y="9.500" width="6" height="5" fill="#999" /></>,
  <><path fill="#fff" d="M.5 3.500 H13.500 V11.500 H.5Z M.5 14 H12" /><circle cx="13" cy="6" r="2.500" fill={L} stroke={B} /><path d="M13 9 V13" /></>,
];

/* ---------- model drawing ---------- */
const P = ({ p, f, s = "#050505", w = 1 }: any) => <polygon points={p} fill={f} stroke={s} strokeWidth={w} strokeLinejoin="round" />;
const N = ({ d, w = 1, s = "#050505", o }: any) => <path d={d} fill="none" stroke={s} strokeWidth={w} strokeDasharray={o} />;
const Model = () => (
  <Scene viewBox="131 170 1458 827" preserveAspectRatio="xMidYMid slice" role="img" aria-label="翼墙三维模型">
    <defs>
      <pattern id="stone" width="14" height="14" patternUnits="userSpaceOnUse" patternTransform="rotate(50)">
        <rect width="14" height="14" fill="#999b8a" />
        <rect width="6" height="14" fill="#8f9181" />
        <path d="M0 3 H14 M0 8 H14" stroke="#a1a492" strokeWidth="1" opacity=".5" />
      </pattern>
      <pattern id="pale" width="9" height="9" patternUnits="userSpaceOnUse" patternTransform="rotate(6)">
        <rect width="9" height="9" fill="#a0a291" />
        <rect width="4" height="9" fill="#979a8b" />
      </pattern>
      <pattern id="dark" width="4" height="3" patternUnits="userSpaceOnUse" patternTransform="rotate(8)">
        <rect width="4" height="3" fill="#34342f" />
        <rect width="4" height="1" fill="#30312c" />
      </pattern>
      <pattern id="mid" width="5" height="3" patternUnits="userSpaceOnUse" patternTransform="rotate(8)">
        <rect width="5" height="3" fill="#4e4e45" />
        <rect width="5" height="1" fill="#494a40" />
      </pattern>
    </defs>
    <N d="M387 170 L1089 997" s="#2f8a3c" o="9 10" />
    <N d="M1161 174 L131 902" s="#2f8a3c" o="9 10" />

    {/* far left wing */}
    <P p="669,362 691,364 689,376 666,391" f="url(#pale)" />
    <P p="642,357 691,363 690,374 666,377 641,373" f="url(#dark)" />
    <P p="749,343 940,364 887,380 740,362" f="url(#stone)" />
    <P p="729,321 749,324 749,363 729,360" f="url(#pale)" />
    <P p="719,316 728,317 729,361 720,360" f="url(#pale)" />
    <P p="647,299 728,308 727,317 719,316 647,308" f="url(#pale)" />
    <P p="647,308 719,316 692,363 644,359" f="url(#dark)" />
    <P p="719,316 720,362 700,366 692,363" f="url(#dark)" />
    <N d="M906 355 L876 376" s="#2f8a3c" o="9 10" />

    {/* far right wing */}
    <P p="1080,362 1085,363 1078,418 1076,410" f="url(#pale)" />
    <P p="886,378 1001,340 1080,349 1080,357 996,348 888,384" f="url(#pale)" />
    <P p="996,348 1080,357 1077,409 1004,400" f="url(#dark)" />
    <P p="888,384 996,348 1004,400 922,439" f="url(#mid)" />
    <N d="M888 384 L1004 400" />
    <P p="887,385 922,439 914,444 887,440" f="url(#dark)" />
    <P p="887,385 892,386 924,440 914,444" f="url(#mid)" />
    <P p="914,443 1004,400 1022,404 936,446" f="url(#pale)" />
    <P p="887,441 936,446 936,459 887,453" f="url(#dark)" />
    <P p="936,446 1022,404 1022,417 936,459" f="url(#dark)" />
    <P p="1022,404 1077,409 1079,423 1022,417" f="url(#dark)" />
    <N d="M915 444 V456 M1004 400 L1077 409" />

    {/* culvert barrel */}
    <P p="886,378 886,443 827,484 709,569 675,608 650,610 650,547" f="#414142" />
    <P p="827,484 887,442 893,443 833,487" f="#929292" />
    <P p="833,487 893,443 893,450 835,489" f="#3a3a3c" />
    <P p="709,568 827,484 832,487 715,569" f="#929292" />
    <P p="672,605 709,568 716,569 674,608" f="#929292" />
    <P p="674,608 716,569 715,576 675,610" f="#3a3a3c" />
    <P p="708,359 886,378 827,422 709,506 659,538 650,547 473,526 484,518 533,486 651,403 702,366" f="#929292" />
    <N d="M886 382 L827 425 L709 509 L659 541" />
    <N d="M702 367 L875 386 M700 369 L874 388 M652 402 L827 422 M533 486 L709 506" w={1.5} />
    <N d="M484 518 L659 538 M827 422 V484 M708 359 L886 378" w={1.3} />
    <N d="M709 506 V568" w={2} />
    <P p="473,526 650,547 650,610 630,608 491,592 473,570" f="#38383a" />
    <N d="M474 528 L649 549" s="#777" o="6 2" />
    <P p="491,539 520,538 562,543 600,547 630,555 629,598 491,584" f="#929292" />
    <P p="491,539 520,538 548,542 500,582 491,582" f="#454546" />
    <P p="491,582 547,542 555,543 500,584" f="#777" />
    <P p="491,583 620,598 629,597 629,608 491,591" f="#38383a" />

    {/* near apron */}
    <P p="512,594 609,606 611,688 380,660" f="url(#stone)" />
    <P p="380,660 611,688 611,700 380,673" f="#32322f" />
    <N d="M555 603 L441 684" s="#2f8a3c" o="9 10" />

    {/* near left wing */}
    <P p="279,649 359,657 491,591 512,594 380,660 347,676 275,667" f="url(#pale)" />
    <P p="275,667 347,676 347,689 274,680" f="url(#dark)" />
    <P p="347,676 380,660 380,673 347,689" f="url(#dark)" />
    <P p="478,541 490,539 483,545 373,618 360,616" f="#77776c" />
    <P p="483,545 491,540 491,592 483,597" f="#55554c" />
    <P p="483,545 483,597 403,635 359,657 359,625 373,618" f="url(#dark)" />
    <N d="M373 618 L403 635" />
    <P p="281,607 373,618 359,625 280,616" f="url(#pale)" />
    <P p="280,616 359,625 359,657 279,649" f="url(#dark)" />

    {/* near right pad and selected wing */}
    <P p="609,606 698,615 693,655 718,670 712,718 611,707" f="url(#pale)" />
    <P p="611,707 712,718 712,731 611,719" f="url(#dark)" />
    <P p="718,670 719,671 712,731 712,718" f="#333" />
    <P p="628,557 640,557 675,610 672,651 714,658 712,698 632,689 630,607" f="rgba(222,128,88,.85)" s="#ea8252" />
    <P p="631,562 639,561 641,650 632,650" f="#a75d3e" s="none" />
    <P p="641,609 656,608 674,612 672,651 641,648" f="#eba27f" s="#e57a4a" />
    <P p="632,652 714,658 711,668 642,659" f="#f3a079" s="#e57a4a" />
    <P p="632,658 711,668 711,698 632,689" f="#7c5242" s="#f08c5e" />
    <N d="M640 557 L652 608 L666 651 M652 608 L668 600 L675 610 M641 648 L667 664" s="#df6b3a" />
  </Scene>
);

const ViewCube = () => (
  <svg width="126" height="122" viewBox="1436 241 126 122" role="img" aria-label="ViewCube">
    <defs>
      <radialGradient id="shade"><stop offset=".3" stopColor="#555" stopOpacity=".55" /><stop offset="1" stopColor="#777" stopOpacity="0" /></radialGradient>
    </defs>
    <g fill="none" stroke="#aaa">
      <ellipse cx="1499" cy="303" rx="61.500" ry="57" />
      <ellipse cx="1499" cy="302" rx="47.500" ry="44" />
    </g>
    <ellipse cx="1500" cy="303" rx="48" ry="28" fill="url(#shade)" />
    <polygon points="1463,273 1494,311 1494,327 1468,297" fill="#e2e2e2" stroke="#888" />
    <polygon points="1494,311 1535,282 1532,299 1494,327" fill="#dcdcdc" stroke="#888" />
    <polygon points="1503,247 1535,282 1494,311 1463,273" fill="#efefef" stroke="#999" />
    <polygon points="1500,258 1519,279 1496,295 1478,275" fill="#e2e5ea" />
    <g fontFamily="Noto Sans CJK SC, sans-serif" textAnchor="middle">
      <text transform="translate(1493 271) rotate(147)" fontSize="26" fill="#98a0ae">上</text>
      <g fontSize="17" fill="#dedede" stroke="#999" strokeWidth=".8">
        <text transform="translate(1469 262) rotate(-30)" dy="2">南</text>
        <text transform="translate(1542 272) rotate(-30)" dy="2">西</text>
        <text transform="translate(1535 345) rotate(-25)" dy="4">北</text>
        <text transform="translate(1452 335) rotate(-30)" dy="3">东</text>
      </g>
    </g>
    <path d="M1475 293 l4 4 M1482 301 l3 4 M1505 312 l1 6 M1511 306 l2 7 M1517 303 l2 5 M1523 299 l1 4" stroke="#999" strokeDasharray="2 1" />
  </svg>
);

/* ---------- data ---------- */
const tabNames = ["结构", "系统", "插入", "注释", "分析", "体量和场地", "协作", "视图", "管理", "创建", "插入", "视图", "管理", "附加模块", "GLS正向设计(建筑)", "橄榄山快模-免费工具", "GLS土建", "机电通用", "GLS风", "GLS水+电", "GLS出图", "GLS精装", "GLS施工", "GLS族", "Lumion®", "Twinmotion 2020"];

type Node = { g: string; t?: "+" | "-"; text: string; icon?: number; bold?: boolean; sel?: boolean };
/* g: one letter per guide column - v line, h elbow, space */
const tree: Node[] = [
  { g: "", t: "-", text: "视图 (全部)", icon: 1 },
  { g: "v", t: "+", text: "结构平面" },
  { g: "v", t: "+", text: "楼层平面" },
  { g: "v", t: "-", text: "三维视图" },
  { g: "vvv", text: "{3D}", bold: true },
  { g: "vvh", text: "三维视图 1" },
  { g: "v", t: "+", text: "立面 (立面 1)" },
  { g: "v", text: "图纸 (全部)", icon: 2 },
  { g: "", t: "-", text: "族", icon: 3 },
  { g: " ", t: "-", text: "体量" },
  { g: " v", t: "-", text: "泄床" },
  { g: " vvh", text: "泄床" },
  { g: " v", t: "-", text: "翼墙基础" },
  { g: " v h", text: "翼墙", sel: true },
  { g: " ", t: "+", text: "填充图案" },
  { g: " ", t: "-", text: "常规模型" },
  { g: " v", t: "-", text: "II型断面基础" },
  { g: " vvh", text: "II型断面" },
  { g: " v", t: "-", text: "II型断面涵身" },
  { g: " vvh", text: "II型断面" },
  { g: " v", t: "-", text: "I型断面基础" },
  { g: " vvh", text: "I型断面" },
  { g: " v", t: "-", text: "I型断面涵身" },
  { g: " vvh", text: "I型断面" },
  { g: " v", t: "-", text: "涵身帽石" },
  { g: " v h", text: "涵身帽" },
  { g: " ", t: "+", text: "注释符号" },
];
const treeIcons: Record<number, React.ReactNode> = {
  1: <Ic w={15}><path d="M4 1 H1 V4 M11 1 H14 V4 M1 11 V14 H4 M14 11 V14 H11" /><path fill="#eee" d="M4 6 L7 4 H11 V9 L8.500 11 H4Z" /></Ic>,
  2: <Ic w={15} h={14}><path fill="#eee" d="M.5 1.500 H10 L14 5 V12.500 H.5Z" /><path d="M3 10 V6 H6.500 V10 M9 10 V4 M3 10 H12" /></Ic>,
  3: <Ic w={15}><path fill="#eee" d="M1 1.500 H6 V7 H1Z M8 1.500 H14 V13.500 H1 V10 H8Z" /></Ic>,
};

const Row = ({ n }: { n: Node }) => {
  const cols = n.g.split("");
  const ends = n.text === "族" || n.text === "注释符号";
  return (
    <TreeRow $bold={n.bold} $sel={n.sel}>
      {cols.map((c, i) => (
        <Guide key={i} $v={c === "v"} $h={c === "h"} $e={!n.t && i === cols.length - 1} />
      ))}
      {n.t && (
        <Guide $v={!ends && n.text !== "视图 (全部)"} $h={ends} $e>
          <Toggle $plus={n.t === "+"} aria-label={n.t === "+" ? "展开" : "折叠"} />
        </Guide>
      )}
      {n.icon ? <><Lead $w={1} />{treeIcons[n.icon]}<Lead $w={2} /></> : <Lead $w={5} />}
      <button>{n.text}</button>
    </TreeRow>
  );
};

const trayIcons = [
  <Ic w={16} c="none"><g fill="#f2b3b6"><circle cx="8" cy="4" r="3" /><circle cx="4" cy="7" r="3" /><circle cx="12" cy="7" r="3" /><circle cx="5.500" cy="11.500" r="3" /><circle cx="10.500" cy="11.500" r="3" /></g><circle cx="8" cy="8" r="2.500" fill="#c43b46" /></Ic>,
  <Ic w={14} h={18} c="#fff"><rect x="4" y="1" width="6" height="11" fill="#fff" rx="1" /><path d="M2 9 V13 H12 V9 M7 13 V17 M4 16.500 H10" /></Ic>,
  <Ic w={18} h={16} c="none"><ellipse cx="7" cy="6" rx="6.500" ry="5.500" fill="#35c86b" /><ellipse cx="12.500" cy="10.500" rx="5" ry="4.500" fill="#e3efe6" /></Ic>,
  <Ic w={16} h={18} c="none"><ellipse cx="8" cy="9" rx="6" ry="8" fill="#050505" /><ellipse cx="8" cy="12" rx="5" ry="5" fill="#fff" /><path fill="#e33324" d="M2 8 H14 V11 H6 V14 H4 V11Z" /><circle cx="6" cy="4" r="1.500" fill="#fff" /><circle cx="10" cy="4" r="1.500" fill="#fff" /><path fill="#f5a623" d="M5 6 H11 L8 8Z M2 16 H7 V18 H2Z M9 16 H14 V18 H9Z" /></Ic>,
  <Ic w={16} c="none"><path fill="#fff" d="M8 0 L15 2 V8 C15 12 11 15 8 16 C5 15 1 12 1 8 V2Z" /><path fill="#2f7de0" d="M8 2 L13.500 3.500 V8 C13 11 11 13 8 14.500 C5 13 3 11 2.500 8 V3.500Z" /><path stroke="#fff" strokeWidth="2" d="M4.500 6 L8 9.500 L12 6" /></Ic>,
  <Ic w={12} h={9} c="#6fa83a"><path fill="#3f6a20" d="M5 .5 H11.500 V8.500 H5Z" /><path d="M.5 4.500 C3 1 7 1 10 4.500 C7 8 3 8 .5 4.500Z" /><circle cx="5" cy="4.500" r="1.200" /></Ic>,
  <Ic w={16} c="none"><rect width="16" height="16" rx="3" fill="#e5702a" /><path stroke="#fff" strokeWidth="1.200" d="M6 3 H12 L9.500 5 M6 6 H12 V12 M6 6 V12 M9 6 V12 M6 9 H12 M2.500 4 L4 5 M2 8 H4 V12 L2 14 M4 12.500 C7 14 10 14 14 13.500" /></Ic>,
  <Ic w={17} h={15} c="#fff"><path d="M5.500 3.500 H16.500 V11.500 H3.500 M9 14.500 H14 M11.500 11.500 V14.500 M.5 1.500 H5.500 V6 H.5Z M3 6 V14" /></Ic>,
  <Ic w={17} h={15} c="#fff"><path d="M1.500 5.500 H4 L8 2 V13 L4 9.500 H1.500Z M10 5.500 C11 7 11 8 10 9.500" /><path stroke="#888" d="M12 4 C14 6.500 14 8.500 12 11 M14 2.500 C17 6 17 9 14 12.500" /></Ic>,
];

const cursor = <path fill="#fff" stroke="#333" d="M8 4 V14 L10.500 12 L12 16 L13.500 15 L12.500 11.500 H15.500Z" />;

export default function App() {
  return (
    <Shell>
      <Global />
      <TitleBar>
        <QuickTools>
          <QuickButton $w={20} aria-label="打开"><Down /></QuickButton>
          <QuickButton $w={18} aria-label="撤销"><Undo /></QuickButton>
          <QuickButton $w={16} aria-label="撤销列表"><Down /></QuickButton>
          <QuickButton $w={20} aria-label="重做"><Redo /></QuickButton>
          <QuickButton $w={16} aria-label="重做列表"><Down /></QuickButton>
          <QuickButton $w={22} aria-label="打印"><Printer /></QuickButton>
          <Sep />
          <QuickButton $w={26} aria-label="测量"><MeasureS /></QuickButton>
          <QuickButton $w={8} aria-label="测量列表"><Down /></QuickButton>
          <QuickButton $w={28} aria-label="对齐尺寸标注"><DimS /></QuickButton>
          <QuickButton $w={22} aria-label="标记"><TagS /></QuickButton>
          <QuickButton $w={24} aria-label="文字"><TextA /></QuickButton>
          <Sep />
          <QuickButton $w={26} aria-label="三维视图"><House /></QuickButton>
          <QuickButton $w={10} aria-label="三维视图列表"><Down /></QuickButton>
          <QuickButton $w={25} aria-label="剖面"><Section /></QuickButton>
          <QuickButton $w={24} $on aria-label="细线"><ThinLines /></QuickButton>
          <Sep />
          <QuickButton $w={24} aria-label="关闭隐藏窗口"><CloseHidden /></QuickButton>
          <QuickButton $w={24} aria-label="切换窗口"><SwitchWin /></QuickButton>
          <QuickButton $w={8} aria-label="窗口列表"><Down /></QuickButton>
          <QuickButton $w={28} aria-label="插件"><Colour /></QuickButton>
          <QuickButton $w={14} aria-label="自定义"><Customize /></QuickButton>
        </QuickTools>
        <WindowTitle><span>Autodesk Revit 2018 -</span><span>翼墙.rfa - 三维视图: {"{3D}"}</span></WindowTitle>
        <TitleTools>
          <Right />
          <Search aria-label="搜索" placeholder="键入关键字或短语" />
          <QuickButton $w={20} aria-label="查找"><Binoc /></QuickButton>
          <QuickButton $w={28} aria-label="通讯中心"><Dish /></QuickButton>
          <QuickButton $w={20} aria-label="收藏夹"><Star /></QuickButton>
          <QuickButton $w={28} aria-label="用户"><User /></QuickButton>
          <SignIn>登录</SignIn>
          <QuickButton $w={12} aria-label="登录列表"><Down /></QuickButton>
          <QuickButton $w={30} aria-label="Exchange Apps"><XLogo /></QuickButton>
          <Sep />
          <QuickButton $w={26} aria-label="帮助"><Help /></QuickButton>
          <QuickButton $w={6} aria-label="帮助列表"><Down /></QuickButton>
        </TitleTools>
      </TitleBar>

      <Tabs>
        <TabTrack>
          {tabNames.map((t, i) => <Tab key={i} $latin={i > 14}>{t}</Tab>)}
          <Tab $on>修改 | 形式</Tab>
          <RibbonToggle aria-label="最小化功能区"><Down $up /></RibbonToggle>
        </TabTrack>
      </Tabs>

      <Ribbon>
        <Panel w={38} title={<EdgeTitle>属性</EdgeTitle>}>
          <IconGrid $cols={1} $cw={32} $rh={36}>
            <Cell aria-label="族类型"><PropWin /></Cell>
            <Cell aria-label="属性"><PropWin grid /></Cell>
          </IconGrid>
        </Panel>
        <Panel w={225} title="绘制" pl={6}>
          <Stack $rows={3}>
            <Small><ModelL />模型</Small>
            <Small><ModelL d />参照</Small>
            <Small><PlaneI />平面</Small>
          </Stack>
          <Gallery>
            <IconGrid $cols={5} $cw={22} $rh={22}>
              {gallery.map((g, i) => <Cell key={i} aria-label={`绘制工具 ${i + 1}`}><Ic w={17}>{g}</Ic></Cell>)}
            </IconGrid>
            <GalleryScroll>
              <Cell aria-label="向上"><Down $up /></Cell>
              <Cell aria-label="向下"><Down /></Cell>
              <Cell aria-label="更多"><Customize /></Cell>
            </GalleryScroll>
          </Gallery>
          <IconGrid $cols={1} $cw={40} $rh={36}>
            <Cell aria-label="在面上绘制"><SketchOff /></Cell>
            <Cell aria-label="在工作平面上绘制"><SketchOff flat /></Cell>
          </IconGrid>
        </Panel>
        <Panel w={110} title="工作平面" pl={2}>
          <Big $w={38}><Ic w={28} h={31} c="none"><g transform="translate(0 3)"><SetPlane /></g></Ic><span>设置</span></Big>
          <Stack $rows={2} $pt={13} $pl={4}>
            <Small><ShowI />显示</Small>
            <Small><ViewerI />查看器</Small>
          </Stack>
        </Panel>
        <Panel w={76} title="剪贴板" pl={7}>
          <Big $w={36} $off><PasteI /><span>粘贴</span><Down $c="#777" /></Big>
          <Stack $rows={3} $pl={9}>
            <Cell aria-label="剪切到剪贴板"><Cut /></Cell>
            <Cell aria-label="复制到剪贴板"><CopyI /></Cell>
            <Cell aria-label="匹配类型属性"><MatchI /></Cell>
          </Stack>
        </Panel>
        <Panel w={110} title="几何图形" pl={6}>
          <Stack $rows={2} $pt={13} $w={70}>
            <Small><CutGeo />剪切<Down /></Small>
            <Small><JoinGeo />连接<Down /></Small>
          </Stack>
          <Stack $rows={2} $pt={13}>
            <Small aria-label="墙连接"><WallGeo /></Small>
            <Small aria-label="连接端切割"><ChainGeo /><Down /></Small>
          </Stack>
        </Panel>
        <Panel w={174} title="修改" pl={4}>
          <IconGrid $cols={1} $cw={40} $rh={36}>
            <Cell aria-label="对齐"><Align /></Cell>
            <Cell aria-label="移动"><Move /></Cell>
          </IconGrid>
          <IconGrid $cols={5} $cw={25} $rh={24}>
            {modify.map((g, i) => <Cell key={i} aria-label={`修改工具 ${i + 1}`}><Ic w={16}>{g}</Ic></Cell>)}
          </IconGrid>
        </Panel>
        <Panel w={58} title="测量" pl={2} last>
          <IconGrid $cols={1} $cw={36} $rh={36}>
            <Cell aria-label="测量"><Measure1 /></Cell>
            <Cell aria-label="尺寸标注"><Measure2 /></Cell>
          </IconGrid>
          <IconGrid $cols={1} $cw={12} $rh={36}>
            <Cell aria-label="测量选项"><Down /></Cell>
            <Cell aria-label="标注选项"><Down /></Cell>
          </IconGrid>
        </Panel>
        <Panel w={43} title="模式" tone="green">
          <Big $w={42} $off><EditProfile /><span>编辑<br />轮廓</span></Big>
        </Panel>
        <Panel w={51} title="形状" tone="green" pl={4}>
          <Big $w={38}><CreateForm /><span>创建<br />形状</span></Big>
          <SideArrow><Down /></SideArrow>
        </Panel>
        <Panel w={47} title={<><span>分割</span><Ic w={6}><path d="M0 0 L5 5 M5 1 V5.500 H1" /></Ic></>} tone="green">
          <Big $w={46}><Divide /><span>分割<br />表面</span></Big>
        </Panel>
        <Panel w={353} title="橄榄山(免费效率工具)" tone="green" pl={2}>
          <Big $w={58}><BoxIcon /><span>包围盒3D</span></Big>
          <Big $w={50}><Rename /><span>单改<br />类型名</span></Big>
          <SideArrow><Down /></SideArrow>
          <Big $w={58}><Funnel /><span>快速过滤</span></Big>
          <Big $w={52}><Funnel lines /><span>精细过滤</span></Big>
          <Big $w={56}><Floors /><span>选多层<br />同处构件</span></Big>
          <Big $w={68}><Annot /><span>构件批注</span><Down /></Big>
        </Panel>
        <Panel w={253} title="形状图元" tone="green" pl={2}>
          <Big $w={36} $off><Cone axis /><span>透视</span></Big>
          <Big $w={42} $off><Cone plus /><span>添加<br />边</span></Big>
          <Big $w={34} $off><Cone plus /><span>添加<br />轮廓</span></Big>
          <Big $w={44}><Merge /><span>融合</span></Big>
          <Stack $rows={3}>
            <Small><PickHost />拾取 新主体</Small>
            <Small $off><LockI />锁定 轮廓</Small>
            <Small $off><LockI />解锁 轮廓</Small>
          </Stack>
        </Panel>
        <Panel w={114} title="选择" tone="green" pl={2}>
          <Big $w={42}><Filter /><span>过滤器</span></Big>
          <Sep $h={70} $m={6} $c="#cfcfcf" />
          <Stack $rows={3} $pl={3}>
            <Small><SelI c={K} k />保存</Small>
            <Small $off><SelI />载入</Small>
            <Small $off><SelI />编辑</Small>
          </Stack>
        </Panel>
        <Panel w={110} title="族编辑器" tone="blue" pl={1}>
          <Big $w={42}><LoadI /><span>载入到<br />项目</span></Big>
          <Big $w={64}><LoadI /><span>载入到<br />项目并关闭</span></Big>
        </Panel>
      </Ribbon>

      <Options>
        <label htmlFor="host">主体:</label>
        <SelectWrap>
          <HostSelect id="host"><option>标高 : 标高 1</option></HostSelect>
          <Chevron />
        </SelectWrap>
        <FlatButton $w={69}>显示主体</FlatButton>
        <Sep $h={18} $m={9} $c="#a9b59c" />
        <FlatButton $w={83}>激活尺寸标注</FlatButton>
      </Options>

      <Work>
        <Props>
          <DockTitle><button aria-label="关闭"><Ic w={9} c="#000" s={2}><path d="M1 1 L8 8 M8 1 L1 8" /></Ic></button></DockTitle>
          <TypePreview><Down $c="#999" /></TypePreview>
          <TypeRow>
            <TypeWrap><TypeSelect aria-label="类型"><option> </option></TypeSelect><Chevron /></TypeWrap>
            <EditType><Ic w={17} c="#a0a0a0"><path d="M1.500 1.500 H7 V7 H1.500Z M9 1.500 H14 V5 M1.500 9 H7 V14.500 H1.500Z" /><rect x="9" y="6.500" width="7" height="9" /><path d="M11 9 H14 M11 12 H14" /></Ic>编辑类型</EditType>
          </TypeRow>
          <PropTable>
            <colgroup><Col $w={9} /><Col $w={102} /><Col $w={12} /></colgroup>
            <tbody>
              <tr><th colSpan={3}><DoubleUp /></th></tr>
              <tr><td /><td><FocusCell><Check type="checkbox" defaultChecked aria-label="可见" /></FocusCell></td><td><Mini aria-label="关联" /></td></tr>
              <tr><td>换</td><td><EditButton>编辑...</EditButton></td><td /></tr>
              <tr><th colSpan={3}><DoubleUp /></th></tr>
              <tr><td /><td>混凝土，预制</td><td><Mini aria-label="关联" /></td></tr>
              <tr><th colSpan={3}><DoubleUp /></th></tr>
              <tr><td /><td>形式</td><td /></tr>
              <tr><td /><td>实心</td><td /></tr>
            </tbody>
          </PropTable>
          <PropFill />
          <PropFoot><Apply>应用</Apply></PropFoot>
        </Props>

        <View>
          <ViewTop>
            <Canvas>
              <Model />
              <MdiButtons>
                <button aria-label="最小化"><Ic w={12}><rect x=".5" y="6.500" width="11" height="3" fill="#fff" /></Ic></button>
                <button aria-label="还原"><Ic w={11} h={12}><path fill="#fff" d="M3.500 .5 H10.500 V8 H3.500Z" /><path fill="#fff" d="M.5 3.500 H8 V11 H.5Z" /><rect x="3" y="6" width="2.500" height="2.500" /></Ic></button>
                <button aria-label="关闭"><Ic w={12}><path fill="#fff" d="M.5 1 H3.500 L6 4 L8.500 1 H11.500 L8 6 L11.500 11 H8.500 L6 8 L3.500 11 H.5 L4 6Z" /></Ic></button>
              </MdiButtons>
              <Cube><ViewCube /></Cube>
              <NavBar>
                <button aria-label="关闭导航栏"><Ic w={8} c="#888"><circle cx="4" cy="4" r="3.500" /><path d="M2.500 2.500 L5.500 5.500 M5.500 2.500 L2.500 5.500" /></Ic></button>
                <button aria-label="导航控制盘"><Ic w={24} c="#888"><path fill="#e8e8e8" d="M11 1 H19 V12 A9 9 0 1 1 11 1Z" /><circle cx="10" cy="10" r="4" fill="#fff" /><path fill={L} stroke="#5b8db8" d="M13 15 L16 12 H23 V19 L20 22 H13Z M13 15 H20 V22 M20 15 L23 12" /></Ic></button>
                <Down $c="#888" />
                <hr />
                <button aria-label="区域放大"><Ic w={17} c="#777"><rect x="1" y="1" width="11" height="11" fill="#94bd90" stroke="#7f9f7c" /><circle cx="11" cy="11" r="3.500" fill="#e4e4e4" /><path d="M13.500 13.500 L16.500 16.500" strokeWidth="2" /></Ic></button>
                <Down $c="#888" />
                <button aria-label="导航栏选项"><Ic w={8} c="#888"><circle cx="4" cy="4" r="3.500" /><path d="M2 4 H6" /></Ic></button>
              </NavBar>
            </Canvas>
            <VScroll><Chevron d="up" /><Thumb /><Chevron /></VScroll>
          </ViewTop>
          <ViewBar>
            <Scale><span>1</span><span>:</span><span>200</span></Scale>
            {viewTools.map((g, i) => <ViewTool key={i} aria-label={`视图控制 ${i + 1}`}><Ic w={16}>{g}</Ic></ViewTool>)}
            <button aria-label="向左"><Chevron d="left" /></button>
            <HTrack><Thumb /></HTrack>
            <button aria-label="向右"><Chevron d="right" /></button>
          </ViewBar>
        </View>

        <Browser>
          <DockTitle $left>项目浏览器 - 翼墙.rfa</DockTitle>
          <TreeBox>{tree.map((n, i) => <Row key={i} n={n} />)}</TreeBox>
          <DockTabs>
            <DockTab $on>项目浏览器 - 翼...</DockTab>
            <DockTab>命</DockTab>
          </DockTabs>
        </Browser>
      </Work>

      <Status>
        <button aria-label="选择链接"><Ic w={18}><ellipse cx="5" cy="5" rx="4" ry="3" stroke="#b79016" strokeWidth="2" /><ellipse cx="12" cy="5" rx="4" ry="3" stroke="#b79016" strokeWidth="2" />{cursor}</Ic></button>
        <button aria-label="选择基线图元"><Ic w={18}><path stroke={B} fill="#dcebf7" d="M1 7 L10 2 H15 M1 7 H12 M1 13 L8 8 M1 13 H12" />{cursor}</Ic></button>
        <button aria-label="选择锁定图元"><Ic w={18}><path stroke="#b4602d" fill="#f0a878" d="M2 1 H11 V4 L9 5 V8 L12 10 H1 L4 8 V5 L2 4Z M6 10 V15" />{cursor}</Ic></button>
        <button aria-label="按面选择图元"><Ic w={18}><path stroke={B} fill={L} d="M2 4 L10 1 V11 L2 15Z" />{cursor}</Ic></button>
        <button aria-label="选择时拖拽图元"><Ic w={18}><path strokeWidth="1.500" d="M5 1 V11 M0 6 H10 M3 3 L5 1 L7 3 M3 9 L5 11 L7 9" /><path stroke="#c22" strokeWidth="2" d="M10 1 L16 7 M16 1 L10 7" />{cursor}</Ic></button>
        <button aria-label="后台进程"><Ic w={17} c="#999" s={3}><circle cx="8.500" cy="8.500" r="5" strokeDasharray="3 1" /></Ic></button>
      </Status>

      <Taskbar>
        <Task $w={152} $line $mr={12}>
          <Ic w={24} c="none"><circle cx="12" cy="13" r="11" fill="#f0472e" /><path fill="#ffb52b" d="M13 1 C19 4 24 9 22 17 C20 8 16 8 14 6Z M1 9 C2 6 4 4 5 4 L7 7 C5 9 3 11 3 15Z" /><circle cx="12" cy="13" r="6" fill="#7a3fd0" /><path fill="#ff8a1f" d="M5 9 C8 6 12 9 13 10 C10 10 9 12 10 14 C13 18 18 16 19 11 C21 18 16 22 11 21 C6 20 3 15 5 9Z" /></Ic>
          创作中心 - 哔哩哔...
        </Task>
        <Task $w={32} $mr={14} aria-label="文件资源管理器">
          <Ic w={22} h={20} c="none"><path fill="#e6a82e" d="M0 1 H8 L10 3 H22 V19 H0Z" /><path fill="#ffd567" d="M0 5 H22 V19 H0Z" /><path fill="#3a96d8" d="M4 12 H18 V19 H14 V15 H8 V19 H4Z" /></Ic>
        </Task>
        <Task $w={152} $line>
          <Ic w={25} h={24} c="none"><ellipse cx="10" cy="9" rx="9.500" ry="8.500" fill="#2fc967" /><ellipse cx="17.500" cy="15.500" rx="7.500" ry="6.500" fill="#e8f2ea" /><g fill="#176b36"><circle cx="7" cy="7" r="1.300" /><circle cx="13" cy="7" r="1.300" /></g><g fill="#555"><circle cx="15" cy="14" r="1" /><circle cx="20" cy="14" r="1" /></g></Ic>
          微信
        </Task>
        <Task $w={160} $on $line>
          <Ic w={24} c="none"><rect width="24" height="24" fill="#e6eef6" /><path fill="#1f5c9c" d="M6 3 H14 C20 3 20 12 15 13 L19 21 H14 L11 14 V21 H6Z M11 6 V10 H13 C15 10 15 6 13 6Z" /><path fill="#6aa0d4" d="M6 3 L9 5 V21 H6Z" /></Ic>
          Autodesk Revit 2...
        </Task>
        <Tray>
          {trayIcons.map((g, i) => <TrayItem key={i} aria-label={`托盘 ${i + 1}`}>{g}</TrayItem>)}
          <TrayItem $big>英</TrayItem>
          <TrayItem $big>23<TempArc><Ic w={11} c="#35b79b" s={2}><path d="M1 1.500 C6 2 9 5 9.500 10" /></Ic></TempArc></TrayItem>
          <Clock>16:20<br />2021/5/1</Clock>
        </Tray>
      </Taskbar>
    </Shell>
  );
}
